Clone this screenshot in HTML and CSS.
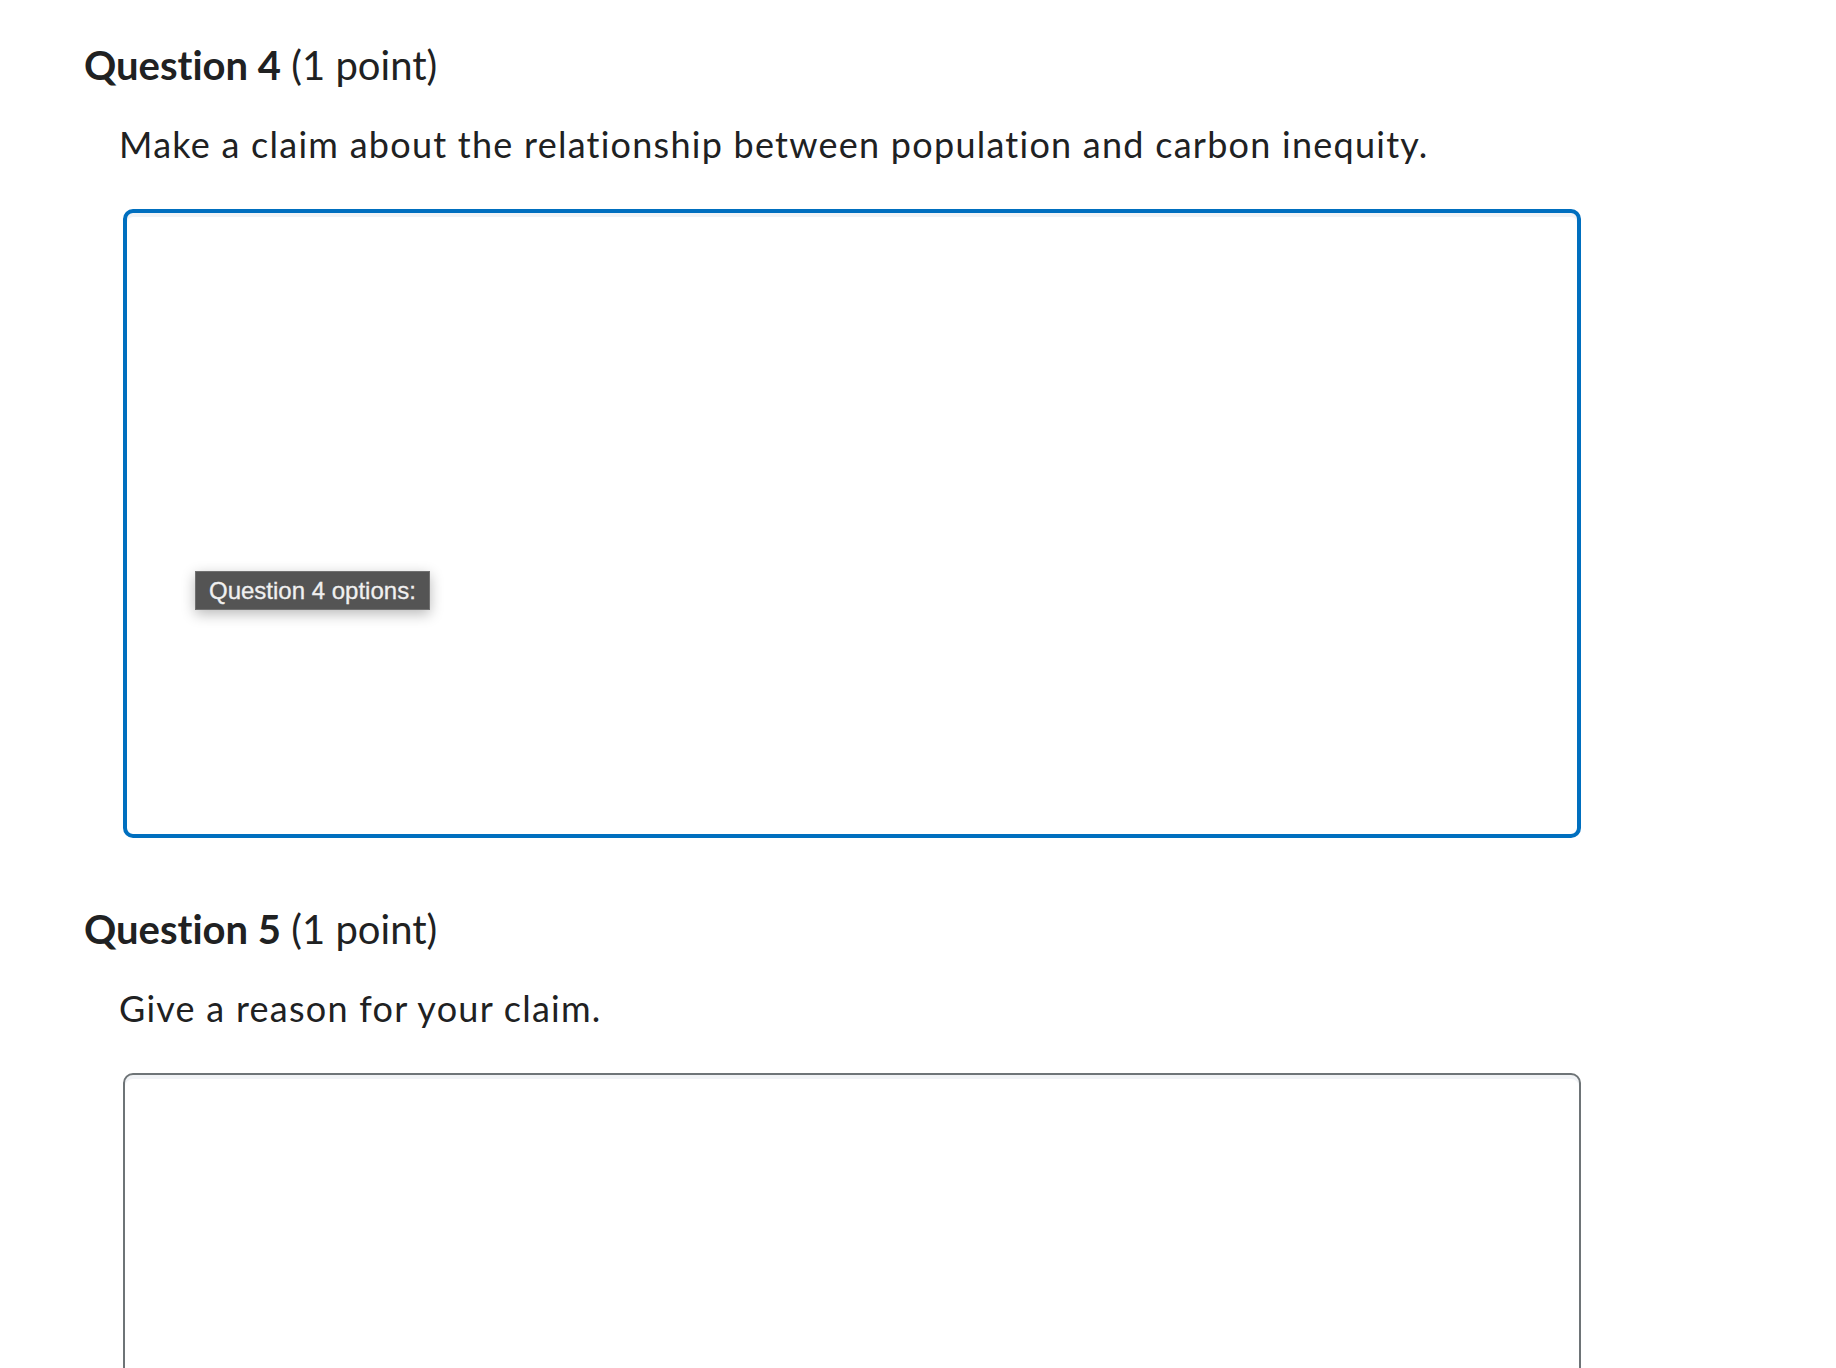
FILE: index.html
```html
<!DOCTYPE html>
<html lang="en">
  <head>
    <meta charset="UTF-8" />
    <meta name="viewport" content="width=device-width, initial-scale=1.0" />
    <title>Quiz</title>
    <link rel="stylesheet" href="styles.css">
  </head>
  <body>
    <div class="quiz">
      <div class="question">
        <h2 class="question-title">
          <strong>Question 4</strong> <span class="question-points">(1 point)</span>
        </h2>
        <p class="question-text">
          Make a claim about the relationship between population and carbon inequity.
        </p>
        <div class="answer-box answer-box--focus">
          <div class="answer-tooltip">Question 4 options:</div>
        </div>
      </div>

      <div class="question">
        <h2 class="question-title">
          <strong>Question 5</strong> <span class="question-points">(1 point)</span>
        </h2>
        <p class="question-text">Give a reason for your claim.</p>
        <div class="answer-box"></div>
      </div>
    </div>
  </body>
</html>
```

FILE: styles.css
```css
body {
  margin: 0;
  background: #ffffff;
  color: #202122;
  font-family: Lato, "Noto Sans", sans-serif;
  font-variant-ligatures: none;
}

.quiz {
  padding: 41px 0 0 84px;
}

/* 各設問 */
.question {
  margin-bottom: 67px;
}

.question-title {
  margin: 0;
  font-size: 40px;
  line-height: 48px;
  font-weight: 400;
}

.question-title strong {
  font-weight: 700;
}

.question-text {
  margin: 34px 0 0 35px;
  font-size: 36px;
  line-height: 43px;
  letter-spacing: 1.25px;
}

/* 回答欄 */
.answer-box {
  position: relative;
  box-sizing: border-box;
  width: 1458px;
  height: 629px;
  margin: 43px 0 0 39px;
  border: 2px solid #6e7477;
  border-radius: 10px;
  box-shadow: inset 0 4px 0 0 rgba(185, 194, 208, 0.2);
  background: #ffffff;
}

.answer-box--focus {
  border: 4px solid #006fbf;
}

/* ツールチップ */
.answer-tooltip {
  position: absolute;
  left: 68px;
  top: 358px;
  padding: 5px 13px;
  background: #545454;
  border: 1px solid #707070;
  color: #f0f0f0;
  font-family: "Liberation Sans", Arial, sans-serif;
  font-size: 24px;
  line-height: 27px;
  white-space: nowrap;
  -webkit-text-stroke: 0.3px #f0f0f0;
  box-shadow: 0 4px 14px rgba(0, 0, 0, 0.28);
}
```
